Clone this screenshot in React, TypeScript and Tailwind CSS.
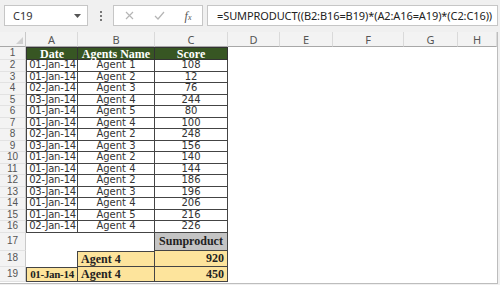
import React from "react";

const rows: [string, string, string][] = [
  ["01-Jan-14", "Agent 1", "108"],
  ["01-Jan-14", "Agent 2", "12"],
  ["02-Jan-14", "Agent 3", "76"],
  ["03-Jan-14", "Agent 4", "244"],
  ["01-Jan-14", "Agent 5", "80"],
  ["01-Jan-14", "Agent 4", "100"],
  ["02-Jan-14", "Agent 2", "248"],
  ["03-Jan-14", "Agent 3", "156"],
  ["01-Jan-14", "Agent 2", "140"],
  ["01-Jan-14", "Agent 4", "144"],
  ["02-Jan-14", "Agent 2", "186"],
  ["03-Jan-14", "Agent 3", "196"],
  ["01-Jan-14", "Agent 4", "206"],
  ["01-Jan-14", "Agent 5", "216"],
  ["02-Jan-14", "Agent 4", "226"],
];

const letters = ["D", "E", "F", "G", "H"];

function RowNum({ n }: { n: number }) {
  return (
    <div className="flex items-center justify-center bg-[#f3f3f3] border-r border-[#c9c9c9] border-b border-b-[#e2e2e2] text-[10px] text-[#555] leading-none font-['Liberation_Sans',sans-serif]">
      {n}
    </div>
  );
}

function Empty({ n = 5 }: { n?: number }) {
  return (
    <>
      {Array.from({ length: n }).map((_, i) => (
        <div key={i} className="bg-white" />
      ))}
    </>
  );
}

export default function App() {
  const serif = "font-['Liberation_Serif',serif] whitespace-nowrap";
  const data = "font-['DejaVu_Sans',sans-serif] text-[10px] text-[#333] leading-none whitespace-nowrap";
  return (
    <div className="w-[500px] h-[285px] bg-[#f0f0f0] overflow-hidden relative">
      {/* formula bar */}
      <div className="h-[30px] flex items-center pl-[4px] pt-[1px] font-['Noto_Sans',sans-serif]">
        <div className="w-[84px] h-[21px] bg-white border border-[#c6c6c6] flex items-center justify-between pl-[8px] pr-[6px]">
          <span className="text-[11px] text-[#333] leading-none">C19</span>
          <svg width="7" height="4" viewBox="0 0 7 4">
            <path d="M0 0 L7 0 L3.5 4 Z" fill="#555" />
          </svg>
        </div>
        <div className="w-[25px] flex flex-col items-center justify-center gap-[2px]">
          <div className="w-[2px] h-[2px] bg-[#777]" />
          <div className="w-[2px] h-[2px] bg-[#777]" />
          <div className="w-[2px] h-[2px] bg-[#777]" />
        </div>
        <div className="w-[90px] h-[21px] bg-white border border-[#c6c6c6] flex items-center">
          <div className="w-[30px] flex justify-center">
            <svg width="9" height="9" viewBox="0 0 9 9">
              <path d="M1 1 L8 8 M8 1 L1 8" stroke="#b5b5b5" strokeWidth="1.2" />
            </svg>
          </div>
          <div className="w-[30px] flex justify-center">
            <svg width="11" height="9" viewBox="0 0 11 9">
              <path d="M1 5 L4 8 L10 1" stroke="#b5b5b5" strokeWidth="1.2" fill="none" />
            </svg>
          </div>
          <div className="w-[28px] flex justify-center">
            <span className="font-['Liberation_Serif',serif] italic text-[12px] text-[#555] leading-none">
              f<span className="text-[8px]">x</span>
            </span>
          </div>
        </div>
        <div className="ml-[4px] w-[291px] h-[21px] bg-white border border-[#c6c6c6] flex items-center pl-[9px]">
          <span className="text-[11px] text-[#222] leading-none whitespace-nowrap tracking-[-0.1px]">
            =SUMPRODUCT((B2:B16=B19)*(A2:A16=A19)*(C2:C16))
          </span>
        </div>
      </div>

      {/* sheet */}
      <div className="absolute left-0 top-[32px] w-[498px] h-[252px] bg-white border-r border-b border-[#bdbdbd]">
        <div className="grid grid-cols-[26px_52px_77px_73px_52px_53px_71px_54px_39px] grid-rows-[15px_13px_repeat(15,11.5px)_18px_16px_15px]">
          {/* column header */}
          <div className="bg-[#f3f3f3] border-r border-b border-[#c9c9c9] border-b-[#a8a8a8] flex items-end justify-end p-[2px]">
            <svg width="7" height="7" viewBox="0 0 7 7">
              <path d="M7 0 L7 7 L0 7 Z" fill="#d0d0d0" />
            </svg>
          </div>
          {["A", "B", "C", ...letters].map((l) => (
            <div
              key={l}
              className="bg-[#f3f3f3] border-r border-[#dadada] border-b border-b-[#a8a8a8] flex items-center justify-center text-[11px] text-[#555] leading-none font-['Noto_Sans',sans-serif]"
            >
              {l}
            </div>
          ))}

          {/* row 1 header */}
          <RowNum n={1} />
          <div className={`bg-[#375623] border border-[#333] flex items-center justify-center text-white font-bold text-[12px] leading-none ${serif}`}>
            Date
          </div>
          <div className={`bg-[#375623] border-y border-r border-[#333] flex items-center justify-center text-white font-bold text-[12px] leading-none ${serif}`}>
            Agents Name
          </div>
          <div className={`bg-[#375623] border-y border-r border-[#333] flex items-center justify-center text-white font-bold text-[12px] leading-none ${serif}`}>
            Score
          </div>
          <Empty />

          {rows.map((r, i) => (
            <React.Fragment key={i}>
              <RowNum n={i + 2} />
              <div className={`bg-white border-x border-b border-[#444] flex items-center justify-end pr-[1px] tracking-[-0.2px] ${data}`}>
                {r[0]}
              </div>
              <div className={`bg-white border-r border-b border-[#444] flex items-center justify-center ${data}`}>
                {r[1]}
              </div>
              <div className={`bg-white border-r border-b border-[#444] flex items-center justify-center ${data}`}>
                {r[2]}
              </div>
              <Empty />
            </React.Fragment>
          ))}

          {/* row 17 */}
          <RowNum n={17} />
          <div className="bg-white" />
          <div className="bg-white border-r border-[#444]" />
          <div className={`bg-[#c4c4c4] border-r border-b border-[#444] flex items-center justify-center text-[#222] font-bold text-[12px] leading-none ${serif}`}>
            Sumproduct
          </div>
          <Empty />

          {/* row 18 */}
          <RowNum n={18} />
          <div className="bg-white border-r border-[#444]" />
          <div className={`bg-[#fde49c] border-t border-r border-b border-[#444] flex items-center justify-start pl-[3px] text-[#222] font-bold text-[12px] leading-none ${serif}`}>
            Agent 4
          </div>
          <div className={`bg-[#fde49c] border-r border-b border-[#444] flex items-center justify-end pr-[3px] text-[#222] font-bold text-[12px] leading-none ${serif}`}>
            920
          </div>
          <Empty />

          {/* row 19 */}
          <RowNum n={19} />
          <div className={`bg-[#fde49c] border border-[#444] flex items-center justify-center text-[#222] font-bold text-[11px] leading-none tracking-[-0.3px] ${serif}`}>
            01-Jan-14
          </div>
          <div className={`bg-[#fde49c] border-r border-b border-[#444] flex items-center justify-start pl-[3px] text-[#222] font-bold text-[12px] leading-none ${serif}`}>
            Agent 4
          </div>
          <div className={`bg-[#fde49c] border-r border-b border-[#444] flex items-center justify-end pr-[3px] text-[#222] font-bold text-[12px] leading-none ${serif}`}>
            450
          </div>
          <Empty />
        </div>
      </div>
    </div>
  );
}
